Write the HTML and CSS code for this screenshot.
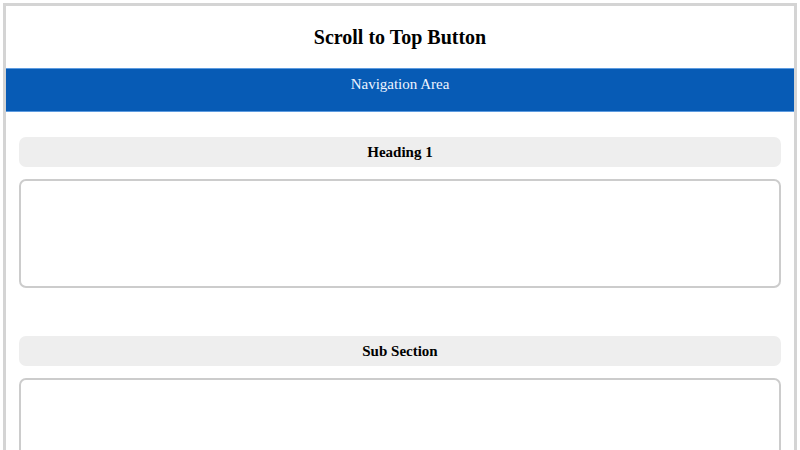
FILE: index.html
```html
<!DOCTYPE html>
<html>
<head>
<meta charset="utf-8">
<link rel="stylesheet" href="styles.css">
</head>
<body>
<div class="frame">
  <header class="top">
    <h1 class="title">Scroll to Top Button</h1>
  </header>
  <nav class="nav">Navigation Area</nav>
  <main class="main">
    <section class="section">
      <h2 class="sec-head">Heading 1</h2>
      <div class="sec-box"></div>
    </section>
    <section class="section">
      <h2 class="sec-head">Sub Section</h2>
      <div class="sec-box"></div>
    </section>
  </main>
</div>
</body>
</html>
```
FILE: styles.css
```css
html, body {
  margin: 0;
  padding: 0;
  background: #ffffff;
}
body {
  padding: 3px;
  font-family: "Liberation Serif", "Times New Roman", serif;
  color: #000;
}
.frame {
  border: 3px solid #d4d4d4;
  min-height: 600px;
}
.top {
  height: 62px;
  display: flex;
  align-items: center;
  justify-content: center;
}
.title {
  margin: 0;
  font-size: 20px;
  font-weight: bold;
  line-height: 24px;
}
.nav {
  height: 44px;
  box-sizing: border-box;
  background: #075bb5;
  border-top: 1px solid #5d9be0;
  border-bottom: 1px solid #5d9be0;
  color: #eef4ff;
  text-align: center;
  font-size: 15px;
  line-height: 18px;
  padding-top: 6px;
}
.main {
  padding: 25px 13px 0;
}
.section {
  margin-bottom: 48px;
}
.sec-head {
  margin: 0 0 12px;
  height: 30px;
  background: #eeeeee;
  border-radius: 7px;
  font-size: 15px;
  font-weight: bold;
  display: flex;
  align-items: center;
  justify-content: center;
}
.sec-box {
  height: 109px;
  border: 2px solid #cccccc;
  border-radius: 7px;
  box-sizing: border-box;
}
```
